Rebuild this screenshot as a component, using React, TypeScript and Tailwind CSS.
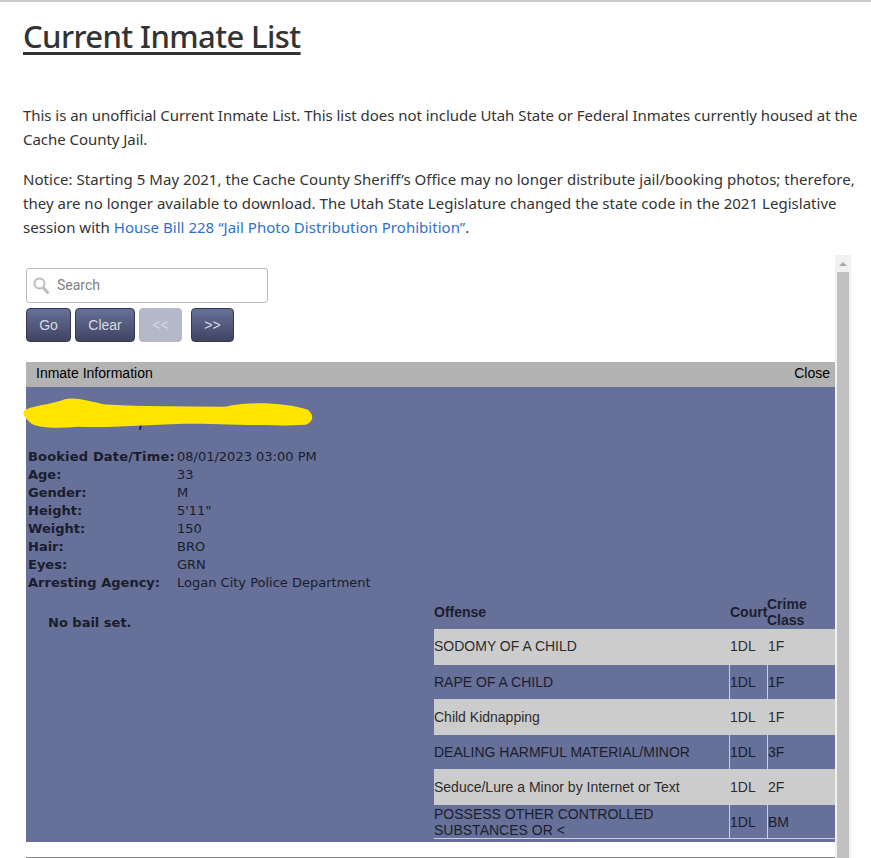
const details = [
  ['Bookied Date/Time:', '08/01/2023 03:00 PM'],
  ['Age:', '33'],
  ['Gender:', 'M'],
  ['Height:', '5\'11"'],
  ['Weight:', '150'],
  ['Hair:', 'BRO'],
  ['Eyes:', 'GRN'],
  ['Arresting Agency:', 'Logan City Police Department'],
];

const offenses = [
  { name: 'SODOMY OF A CHILD', court: '1DL', cls: '1F', h: 'h-[36px]' },
  { name: 'RAPE OF A CHILD', court: '1DL', cls: '1F', h: 'h-[34px]' },
  { name: 'Child Kidnapping', court: '1DL', cls: '1F', h: 'h-[36px]' },
  { name: 'DEALING HARMFUL MATERIAL/MINOR', court: '1DL', cls: '3F', h: 'h-[34px]' },
  { name: 'Seduce/Lure a Minor by Internet or Text', court: '1DL', cls: '2F', h: 'h-[36px]' },
  { name: 'POSSESS OTHER CONTROLLED SUBSTANCES OR <', court: '1DL', cls: 'BM', h: 'h-[34px]' },
];

function NavButton({ label, className }: { label: string; className: string }) {
  return (
    <button
      className={`h-[34px] rounded-[4px] border border-[#33384f] bg-gradient-to-b from-[#677099] to-[#3f4562] text-[14px] text-[#d8dae2] ${className}`}
    >
      {label}
    </button>
  );
}

export default function App() {
  return (
    <div className="h-[858px] overflow-hidden border-t-2 border-[#cccccc] bg-white font-['Noto_Sans',sans-serif] text-[#333333]">
      <div className="pl-[23px] pr-[8px]">
        <h1 className="mt-[12px] h-[44px] text-[31px] font-medium leading-[44px] tracking-[-0.6px] underline decoration-[3px] underline-offset-[4px]">
          Current Inmate List
        </h1>
        <p className="mt-[45px] text-[15px] leading-[24px] tracking-[-0.04px]">
          This is an unofficial Current Inmate List. This list does not include Utah State or Federal Inmates currently
          housed at the Cache County Jail.
        </p>
        <p className="mt-[16px] text-[15px] leading-[24px] tracking-[0.03px]">
          Notice: Starting 5 May 2021, the Cache County Sheriff’s Office may no longer distribute jail/booking photos;
          therefore, they are no longer available to download. The Utah State Legislature changed the state code in the
          2021 Legislative session with{' '}
          <a className="text-[#2f6fd0]">House Bill 228 “Jail Photo Distribution Prohibition”</a>.
        </p>
      </div>

      <div className="mt-[16px] flex pl-[26px]">
        <div className="w-[809px]">
          <div className="pt-[13px]">
            <div className="flex h-[35px] w-[242px] items-center rounded-[3px] border border-[#bbbbbb] bg-white pl-[6px]">
              <svg width="17" height="18" viewBox="0 0 17 18" fill="none" stroke="#bdbdbd" strokeWidth="2">
                <circle cx="6.5" cy="6.5" r="5" />
                <path d="M10 10.5 L15.5 16.5" strokeWidth="3" />
              </svg>
              <span className="ml-[7px] font-['Roboto',sans-serif] text-[14px] text-[#808080]">Search</span>
            </div>
            <div className="mt-[5px] flex font-['Liberation_Sans',sans-serif]">
              <NavButton label="Go" className="w-[45px]" />
              <NavButton label="Clear" className="ml-[4px] w-[60px]" />
              <button className="ml-[4px] h-[34px] w-[43px] rounded-[4px] border border-[#b4b8c6] bg-[#b4b8c8] text-[14px] text-[#d8dae2]">
                &lt;&lt;
              </button>
              <NavButton label=">>" className="ml-[9px] w-[43px]" />
            </div>
          </div>

          <div className="mt-[20px] font-['Liberation_Sans',sans-serif]">
            <div className="flex h-[25px] items-center justify-between bg-[#b3b3b3] pb-[3px] pl-[10px] pr-[5px] text-[14px] text-black">
              <span>Inmate Information</span>
              <span>Close</span>
            </div>

            <div className="relative h-[455px] bg-[#667098]">
              {/* scribble over the redacted name */}
              <svg
                className="absolute left-[-4px] top-[9px]"
                width="292"
                height="34"
                viewBox="0 0 288 32"
                preserveAspectRatio="none"
              >
                <path d="M118 26 L116 32" stroke="#1a1a2a" strokeWidth="1.5" />
                <path
                  d="M2 14 C8 9 30 8 42 3 C54 1 66 5 82 8 C120 10 160 10 200 10 C225 5 260 6 282 13 C288 18 288 24 280 27 C250 29 200 26 160 26 C120 27 90 30 55 29 C35 31 12 30 8 25 C4 21 0 18 2 14 Z"
                  fill="#ffe500"
                />
              </svg>

              <div className="pl-[2px] pt-[61px] font-['DejaVu_Sans',sans-serif] text-[13px] leading-[18px] text-[#1a1d2c]">
                {details.map(([label, value], i) => (
                  <div key={label} className="flex">
                    <span className={`w-[149px] shrink-0 font-bold ${i === 0 ? 'tracking-[0.17px]' : ''}`}>{label}</span>
                    <span className="whitespace-nowrap">{value}</span>
                  </div>
                ))}
              </div>

              <div className="mt-[4px] flex">
                <div className="w-[408px] shrink-0 pl-[22px] pt-[17px] font-['DejaVu_Sans',sans-serif] text-[13px] font-bold text-[#1a1d2c]">
                  No bail set.
                </div>
                <table className="w-[401px] table-fixed border-separate border-spacing-0 text-[14px] leading-[16px] text-[#1b1e2e]">
                  <colgroup>
                    <col className="w-[295px]" />
                    <col className="w-[38px]" />
                    <col className="w-[68px]" />
                  </colgroup>
                  <thead>
                    <tr className="h-[33px] text-left font-bold">
                      <th className="p-0 pb-[1px]">Offense</th>
                      <th className="p-0 pb-[1px] pl-[1px]">Court</th>
                      <th className="p-0 pb-[1px]">Crime Class</th>
                    </tr>
                  </thead>
                  <tbody>
                    {offenses.map((o, i) => {
                      const odd = i % 2 === 1;
                      const last = i === offenses.length - 1;
                      return (
                        <tr key={o.name} className={`${o.h} ${odd ? '' : 'bg-[#cccccc] text-[#2c2c2c]'}`}>
                          <td className={`p-0 ${last ? 'border-b border-[#ccd0dd]' : ''} ${i === 0 ? 'pb-[2px]' : ''}`}>{o.name}</td>
                          <td
                            className={`border-l p-0 ${odd ? 'border-[#ccd0dd]' : 'border-transparent'} ${last ? 'border-b' : ''} ${i === 0 ? 'pb-[2px]' : ''}`}
                          >
                            {o.court}
                          </td>
                          <td
                            className={`border-l p-0 ${odd ? 'border-[#ccd0dd]' : 'border-transparent'} ${last ? 'border-b' : ''} ${i === 0 ? 'pb-[2px]' : ''}`}
                          >
                            {o.cls}
                          </td>
                        </tr>
                      );
                    })}
                  </tbody>
                </table>
              </div>
            </div>
            <div className="mt-[15px] h-px bg-[#888888]" />
          </div>
        </div>

        {/* scrollbar */}
        <div className="flex h-[620px] w-[16px] flex-col bg-[#f1f1f1] px-[2px]">
          <div className="flex h-[17px] shrink-0 items-center justify-center">
            <div className="h-0 w-0 border-x-[4px] border-b-[4px] border-x-transparent border-b-[#a8a8a8]" />
          </div>
          <div className="flex-1 bg-[#c1c1c1]" />
        </div>
      </div>
    </div>
  );
}
